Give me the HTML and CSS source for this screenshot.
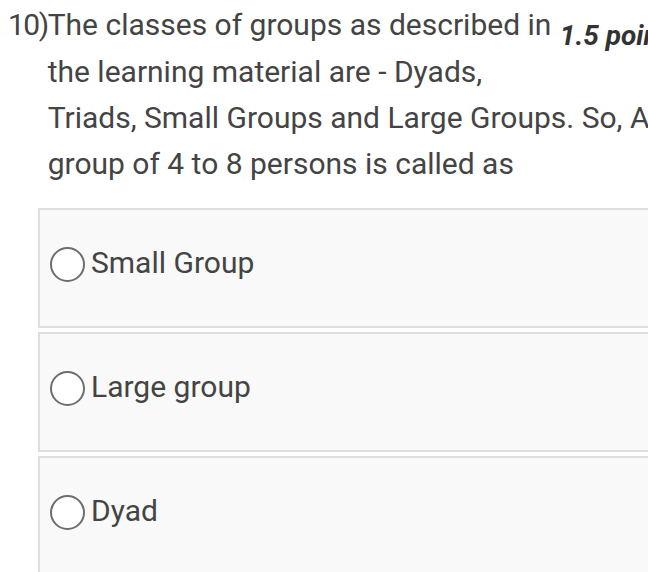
FILE: index.html
```html
<!DOCTYPE html>
<html>
<head>
<meta charset="utf-8">
<link rel="stylesheet" href="styles.css">
</head>
<body>
<div class="page">
  <div class="question">
    <span class="num">10)</span>
    <div class="qtext">
      <div class="line">The classes of groups as described in <span class="points">1.5 points</span></div>
      <div class="line">the learning material are - Dyads,</div>
      <div class="line">Triads, Small Groups and Large Groups. So, A</div>
      <div class="line">group of 4 to 8 persons is called as</div>
    </div>
  </div>
  <div class="options">
    <label class="option"><span class="radio"></span><span class="opt-text">Small Group</span></label>
    <label class="option"><span class="radio"></span><span class="opt-text">Large group</span></label>
    <label class="option"><span class="radio"></span><span class="opt-text">Dyad</span></label>
  </div>
</div>
</body>
</html>
```
FILE: styles.css
```css
html, body {
  margin: 0;
  padding: 0;
  background: #ffffff;
  overflow: hidden;
}
.page {
  width: 648px;
  height: 572px;
  overflow: hidden;
  font-family: Roboto, "Liberation Sans", sans-serif;
  color: #444444;
}
.question {
  display: flex;
  padding: 2px 0 0 8px;
  font-size: 30px;
  line-height: 46px;
  white-space: nowrap;
}
.num {
  flex: none;
  letter-spacing: -1.5px;
}
.qtext {
  flex: none;
}
.points {
  font-weight: bold;
  font-style: italic;
  font-size: 28px;
  color: #333333;
  position: relative;
  top: 10px;
  margin-left: 1px;
}
.options {
  margin-top: 21px;
  margin-left: 38px;
  width: 700px;
  display: flex;
  flex-direction: column;
  gap: 4px;
}
.option {
  box-sizing: border-box;
  height: 120px;
  border: 2px solid #dedede;
  background: #f9f9f9;
  display: flex;
  align-items: center;
  padding-left: 10px;
  padding-bottom: 8px;
  gap: 6px;
}
.radio {
  width: 31px;
  height: 31px;
  border: 2px solid #6e6e6e;
  border-radius: 50%;
  background: #ffffff;
  flex: none;
}
.opt-text {
  font-size: 30px;
  color: #444444;
  margin-bottom: 4px;
}
```
